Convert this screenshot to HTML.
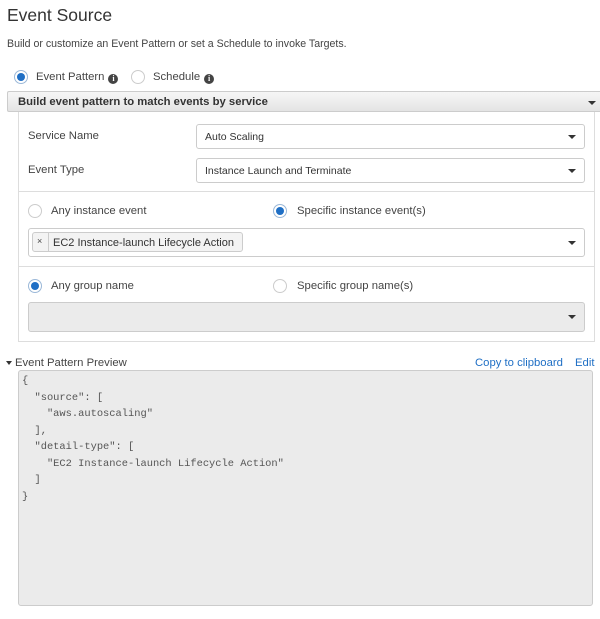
<!DOCTYPE html>
<html><head><style>
body{margin:0;width:600px;height:619px;background:#fff;font-family:"Liberation Sans",Arial,sans-serif;color:#444;position:relative;overflow:hidden}
.a{position:absolute}
.t{font-size:11.3px}
.radio{position:absolute;width:12px;height:12px;border:1px solid #ccc;border-radius:50%;background:#fff}
.radio.on::after{content:"";position:absolute;left:2px;top:2px;width:8px;height:8px;border-radius:50%;background:#1f6fc5}
.radio.on{border-color:#9bb8d8}
.sel{position:absolute;border:1px solid #ccc;border-radius:3px;background:#fff;box-sizing:border-box}
.caret{position:absolute;width:0;height:0;border-left:4px solid transparent;border-right:4px solid transparent;border-top:4px solid #333}
.info{display:inline-block;width:10px;height:10px;border-radius:50%;background:#444;color:#fff;font-size:8px;line-height:10px;text-align:center;font-weight:bold;vertical-align:-1px;margin-left:4px;font-family:"Liberation Serif",serif}
pre{margin:0;font-family:"Liberation Mono",monospace;font-size:10.4px;line-height:16.5px;color:#555}
</style></head><body>
<div class="a" style="left:7px;top:5px;font-size:17.5px;color:#333">Event Source</div>
<div class="a" style="left:7px;top:38px;font-size:10.6px;color:#444">Build or customize an Event Pattern or set a Schedule to invoke Targets.</div>
<div class="radio on" style="left:14px;top:70px"></div>
<div class="a t" style="left:36px;top:71px">Event Pattern<span class="info">i</span></div>
<div class="radio" style="left:131px;top:70px"></div>
<div class="a t" style="left:153px;top:71px">Schedule<span class="info">i</span></div>
<div class="a" style="left:7px;top:91px;width:593px;height:21px;background:linear-gradient(#f6f6f6,#e4e4e4);border:1px solid #ccc;border-right:none;box-sizing:border-box;border-radius:2px 0 0 2px"></div>
<div class="a" style="left:18px;top:96px;font-size:11.3px;font-weight:bold;color:#333">Build event pattern to match events by service</div>
<div class="caret" style="left:588px;top:101px"></div>
<div class="a" style="left:18px;top:112px;width:577px;height:230px;border:1px solid #ddd;border-top:none;box-sizing:border-box"></div>
<div class="a" style="left:18px;top:191px;width:577px;height:1px;background:#ddd"></div>
<div class="a" style="left:18px;top:266px;width:577px;height:1px;background:#ddd"></div>
<div class="a t" style="left:28px;top:130px">Service Name</div>
<div class="sel" style="left:196px;top:124px;width:389px;height:25px"></div>
<div class="a" style="left:205px;top:131px;font-size:10.5px;color:#333">Auto Scaling</div>
<div class="caret" style="left:568px;top:135px"></div>
<div class="a t" style="left:28px;top:164px">Event Type</div>
<div class="sel" style="left:196px;top:158px;width:389px;height:25px"></div>
<div class="a" style="left:205px;top:165px;font-size:10.5px;color:#333">Instance Launch and Terminate</div>
<div class="caret" style="left:568px;top:169px"></div>
<div class="radio" style="left:28px;top:204px"></div>
<div class="a t" style="left:51px;top:205px">Any instance event</div>
<div class="radio on" style="left:273px;top:204px"></div>
<div class="a t" style="left:297px;top:205px">Specific instance event(s)</div>
<div class="sel" style="left:28px;top:228px;width:557px;height:29px"></div>
<div class="a" style="left:32px;top:232px;width:211px;height:20px;border:1px solid #ccc;border-radius:3px;background:#f3f3f3;box-sizing:border-box"></div>
<div class="a" style="left:48px;top:232px;width:1px;height:20px;background:#ccc"></div>
<div class="a" style="left:37px;top:236px;font-size:9px;color:#444">×</div>
<div class="a" style="left:53px;top:237px;font-size:11px;color:#333">EC2 Instance-launch Lifecycle Action</div>
<div class="caret" style="left:568px;top:241px"></div>
<div class="radio on" style="left:28px;top:279px"></div>
<div class="a t" style="left:51px;top:280px">Any group name</div>
<div class="radio" style="left:273px;top:279px"></div>
<div class="a t" style="left:297px;top:280px">Specific group name(s)</div>
<div class="sel" style="left:28px;top:302px;width:557px;height:30px;background:#ebebeb"></div>
<div class="caret" style="left:568px;top:315px"></div>
<div class="caret" style="left:6px;top:361px;border-left-width:3px;border-right-width:3px;border-top-width:4px"></div>
<div class="a t" style="left:15px;top:357px">Event Pattern Preview</div>
<div class="a t" style="left:475px;top:357px;color:#1f6fc5">Copy to clipboard</div>
<div class="a t" style="left:575px;top:357px;color:#1f6fc5">Edit</div>
<div class="a" style="left:18px;top:370px;width:575px;height:236px;background:#ebebeb;border:1px solid #ccc;box-sizing:border-box;border-radius:3px"></div>
<pre class="a" style="left:22px;top:373px">{
  "source": [
    "aws.autoscaling"
  ],
  "detail-type": [
    "EC2 Instance-launch Lifecycle Action"
  ]
}</pre>
</body></html>
